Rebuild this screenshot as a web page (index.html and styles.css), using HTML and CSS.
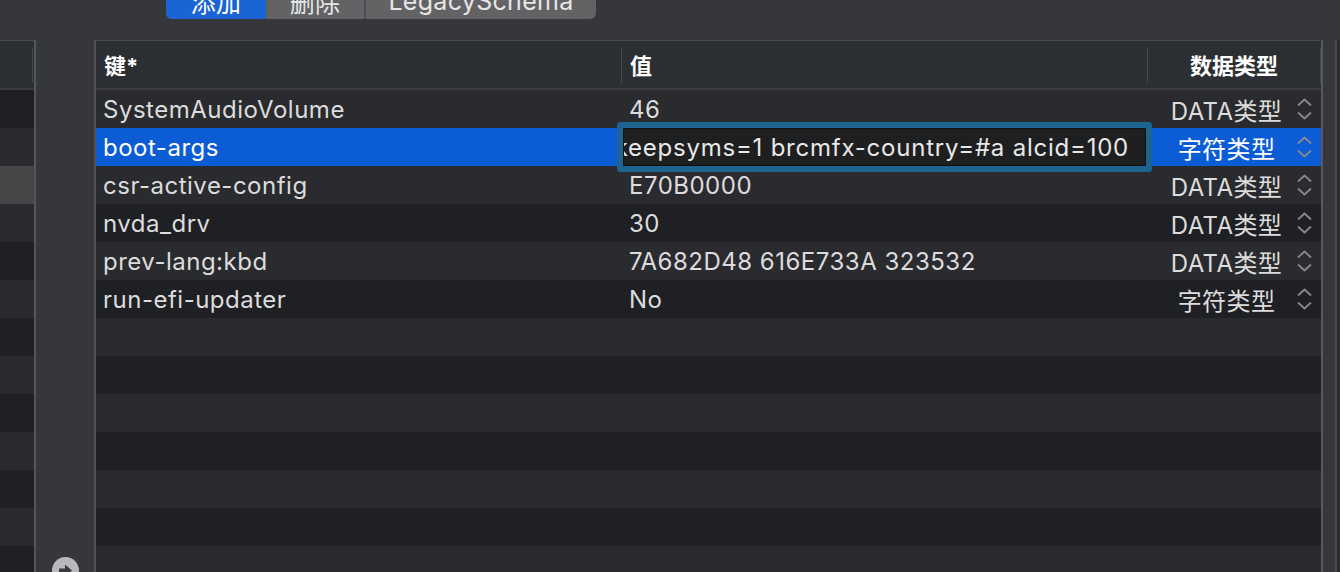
FILE: index.html
```html
<!DOCTYPE html>
<html lang="zh">
  <head>
    <meta charset="UTF-8" />
    <title>NVRAM</title>
    <link rel="stylesheet" href="styles.css">
  </head>
  <body>
    <div class="toolbar">
      <div class="segmented">
        <div class="seg seg-add active">添加</div>
        <div class="seg seg-del">删除</div>
        <div class="seg seg-legacy">LegacySchema</div>
      </div>
    </div>

    <div class="main">
      <div class="sidebar">
        <div class="side-head"><span class="side-sep"></span></div>
        <div class="side-row"></div>
        <div class="side-row"></div>
        <div class="side-row selected"></div>
        <div class="side-row"></div>
        <div class="side-row"></div>
        <div class="side-row"></div>
        <div class="side-row"></div>
        <div class="side-row"></div>
        <div class="side-row"></div>
        <div class="side-row"></div>
        <div class="side-row"></div>
        <div class="side-row"></div>
        <div class="side-row"></div>
      </div>

      <div class="gutter">
        <div class="go-btn">
          <svg width="27" height="27" viewBox="0 0 27 27">
            <circle cx="13.5" cy="13.5" r="13.5" fill="#b9b9bb" />
            <path d="M7 11.5 H13 V7.5 L20 13.5 L13 19.5 V15.5 H7 Z" fill="#3a3b3e" />
          </svg>
        </div>
      </div>

      <div class="table">
        <div class="thead">
          <div class="th th-key">键*</div>
          <div class="th th-value">值</div>
          <div class="th th-type">数据类型</div>
        </div>

        <div class="row">
          <div class="cell">SystemAudioVolume</div>
          <div class="cell value">46</div>
          <div class="cell type"><span>DATA类型</span><svg class="chev" width="15" height="22" viewBox="0 0 15 22"><path d="M1.5 7 L7.5 1.5 L13.5 7 M1.5 15 L7.5 20.5 L13.5 15" /></svg></div>
        </div>
        <div class="row selected">
          <div class="cell">boot-args</div>
          <div class="cell value editing">
            <div class="field"><span>keepsyms=1 brcmfx-country=#a alcid=100</span></div>
          </div>
          <div class="cell type"><span>字符类型</span><svg class="chev" width="15" height="22" viewBox="0 0 15 22"><path d="M1.5 7 L7.5 1.5 L13.5 7 M1.5 15 L7.5 20.5 L13.5 15" /></svg></div>
        </div>
        <div class="row">
          <div class="cell">csr-active-config</div>
          <div class="cell value">E70B0000</div>
          <div class="cell type"><span>DATA类型</span><svg class="chev" width="15" height="22" viewBox="0 0 15 22"><path d="M1.5 7 L7.5 1.5 L13.5 7 M1.5 15 L7.5 20.5 L13.5 15" /></svg></div>
        </div>
        <div class="row">
          <div class="cell">nvda_drv</div>
          <div class="cell value">30</div>
          <div class="cell type"><span>DATA类型</span><svg class="chev" width="15" height="22" viewBox="0 0 15 22"><path d="M1.5 7 L7.5 1.5 L13.5 7 M1.5 15 L7.5 20.5 L13.5 15" /></svg></div>
        </div>
        <div class="row">
          <div class="cell">prev-lang:kbd</div>
          <div class="cell value">7A682D48 616E733A 323532</div>
          <div class="cell type"><span>DATA类型</span><svg class="chev" width="15" height="22" viewBox="0 0 15 22"><path d="M1.5 7 L7.5 1.5 L13.5 7 M1.5 15 L7.5 20.5 L13.5 15" /></svg></div>
        </div>
        <div class="row">
          <div class="cell">run-efi-updater</div>
          <div class="cell value">No</div>
          <div class="cell type"><span>字符类型</span><svg class="chev" width="15" height="22" viewBox="0 0 15 22"><path d="M1.5 7 L7.5 1.5 L13.5 7 M1.5 15 L7.5 20.5 L13.5 15" /></svg></div>
        </div>
        <div class="row empty"></div>
        <div class="row empty"></div>
        <div class="row empty"></div>
        <div class="row empty"></div>
        <div class="row empty"></div>
        <div class="row empty"></div>
        <div class="row empty"></div>
      </div>

      <div class="edge"></div>
    </div>
  </body>
</html>
```

FILE: styles.css
```css
html,
body {
  margin: 0;
  height: 100%;
  overflow: hidden;
}

body {
  background: #36373b;
  font-family: Inter, "Noto Sans CJK SC", sans-serif;
  color: #dcdcdd;
}

.toolbar {
  display: flex;
  height: 40px;
  padding-left: 166px;
}

.segmented {
  display: flex;
  width: 430px;
  height: 37px;
  margin-top: -18px;
  border-radius: 6px;
  overflow: hidden;
  background: #636366;
}

.seg {
  display: flex;
  align-items: center;
  justify-content: center;
  font-size: 25px;
  letter-spacing: 0.3px;
  color: #e6e6e7;
}

.seg-add {
  width: 100px;
  background: #1a64d6;
  color: #ffffff;
}

.seg-del {
  width: 98px;
  border-right: 2px solid #4c4c50;
}

.seg-legacy {
  flex: 1;
}

.main {
  display: flex;
  height: 546px;
}

/* left list */
.sidebar {
  width: 34px;
  border-top: 1px solid #4a4b4e;
  border-right: 2px solid #555659;
}

.side-head {
  height: 47px;
  background: #2b2e32;
  border-bottom: 2px solid #3a3c40;
  display: flex;
  align-items: center;
  justify-content: flex-end;
  padding-right: 1px;
}

.side-sep {
  width: 1px;
  height: 34px;
  background: #474a4d;
}

.side-row {
  height: 38px;
}

.side-row:nth-child(even) {
  background: #1e2023;
}

.side-row:nth-child(odd) {
  background: #2a2b2f;
}

.side-row.selected {
  background: #464649;
}

.gutter {
  width: 58px;
  display: flex;
  flex-direction: column;
  justify-content: flex-end;
  align-items: center;
}

.go-btn {
  height: 27px;
  margin-bottom: 2px;
}

/* table */
.table {
  width: 1225px;
  border-top: 1px solid #4a4b4e;
  border-left: 2px solid #505154;
  border-right: 2px solid #58595c;
}

.thead {
  display: grid;
  grid-template-columns: 525px 526px 1fr;
  height: 49px;
  box-sizing: border-box;
  padding: 7px 0 6px;
  background: #2b2e32;
  border-bottom: 2px solid #3a3c40;
}

.th {
  display: flex;
  align-items: center;
  padding-bottom: 3px;
  font-size: 22px;
  font-weight: 700;
  color: #ffffff;
}

.th-key {
  padding-left: 8px;
}

.th-value {
  padding-left: 8px;
  border-left: 1px solid #474a4d;
}

.th-type {
  justify-content: center;
  border-left: 1px solid #474a4d;
  border-right: 1px solid #474a4d;
}

.row {
  display: grid;
  grid-template-columns: 525px 526px 1fr;
  height: 38px;
}

.row:nth-of-type(odd) {
  background: #1e2023;
}

.row:nth-of-type(even) {
  background: #2a2b2f;
}

.row.selected {
  background: #0b5cd5;
  color: #ffffff;
}

.cell {
  display: flex;
  align-items: center;
  padding-left: 7px;
  font-size: 24px;
  letter-spacing: 0.5px;
  white-space: nowrap;
  overflow: hidden;
}

.cell.value {
  padding-left: 8px;
}

.cell.editing {
  padding: 0 1px 0 2px;
  overflow: visible;
}

.field {
  position: relative;
  z-index: 1;
  flex: 1;
  height: 38px;
  box-sizing: border-box;
  display: flex;
  align-items: center;
  justify-content: flex-end;
  padding-right: 16px;
  overflow: hidden;
  background: #1e1f21;
  border: 1px solid #0f1011;
  border-radius: 1px;
  box-shadow: 0 0 0 6px #1e6491;
  color: #e8e8e8;
  letter-spacing: 0.77px;
}

.field span {
  flex: none;
}

.cell.type {
  padding: 0 9px 0 16px;
  gap: 7px;
  letter-spacing: 0.4px;
}

.cell.type span {
  flex: 1;
  text-align: center;
}

.chev {
  flex: none;
}

.chev path {
  fill: none;
  stroke: #88888c;
  stroke-width: 1.8;
  stroke-linecap: round;
  stroke-linejoin: round;
}

.edge {
  width: 3px;
  margin-left: 12px;
  border-left: 2px solid #4a4b4e;
  background: #2a2b2f;
}
```
